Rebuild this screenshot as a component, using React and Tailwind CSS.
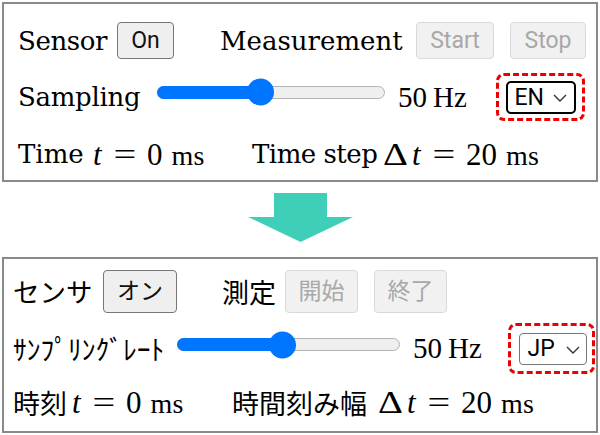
import React from 'react';

const serif = "font-['DejaVu_Serif',serif]";
const math = "font-['Liberation_Serif',serif]";
const ui = "font-['Roboto','Noto_Sans_CJK_JP',sans-serif]";
const jp = "font-['Noto_Sans_CJK_JP',sans-serif]";

const Button = ({ children, disabled, className }) => (
  <button
    disabled={disabled}
    className={`${ui} flex shrink-0 items-center justify-center whitespace-nowrap rounded-[4px] border text-[23px] leading-none ${
      disabled ? 'border-[#d9d9d9] bg-[#f1f1f1] text-[#a8a8a8]' : 'border-[#767676] bg-[#efefef] text-[#111]'
    } ${className}`}
  >
    {children}
  </button>
);

const Slider = ({ track, fill, thumb }) => (
  <div className={`relative h-[13px] rounded-full border border-[#b3b3b3] bg-[#efefef] ${track}`}>
    <div className={`absolute -left-px -top-px -bottom-px rounded-full bg-[#0075ff] ${fill}`} />
    <div className={`absolute top-1/2 h-[27px] w-[27px] -translate-y-1/2 rounded-full bg-[#0075ff] ${thumb}`} />
  </div>
);

const Chevron = () => (
  <svg width="14" height="8" viewBox="0 0 14 8" className="mt-[2px]">
    <polyline points="1,1 7,7 13,1" fill="none" stroke="#333" strokeWidth="1.4" />
  </svg>
);

// t = 0 ms, drawn like the KaTeX output
const Formula = ({ delta, value }) => (
  <span className={`${math} flex items-baseline whitespace-nowrap text-[31px] leading-none text-black`}>
    {delta && <span className="inline-block w-[29px] origin-left scale-x-[1.25]">Δ</span>}
    <span className="italic">t</span>
    <span className="ml-[14px] inline-block scale-x-[1.3]">=</span>
    <span className="ml-[14px]">{value}</span>
    <span className="ml-[9px] text-[28px]">ms</span>
  </span>
);

export default function App() {
  return (
    <div className="w-[600px] h-[435px] bg-white pt-[2px] px-[2px]">
      {/* English panel */}
      <div className="h-[180px] border-2 border-[#8a8a8a] pl-[14px] pt-[18px]">
        <div className="flex h-[37px] items-center">
          <span className={`${serif} w-[90px] shrink-0 text-[26px] leading-none tracking-[-0.4px]`}>Sensor</span>
          <Button className="ml-[9px] h-[37px] w-[57px]">On</Button>
          <span className={`${serif} ml-[46px] w-[187px] shrink-0 text-[26px] leading-none`}>Measurement</span>
          <Button disabled className="ml-[9px] h-[37px] w-[78px]">Start</Button>
          <Button disabled className="ml-[16px] h-[37px] w-[76px]">Stop</Button>
        </div>
        <div className="mt-[13px] flex h-[50px] items-center">
          <span className={`${serif} w-[127px] shrink-0 text-[26px] leading-none tracking-[-0.3px]`}>Sampling</span>
          <div className="ml-[12px] flex h-full w-[228px] shrink-0 items-center pb-[10px]">
            <Slider track="w-[228px]" fill="w-[104px]" thumb="left-[89px]" />
          </div>
          <span className={`${math} ml-[13px] w-[69px] shrink-0 whitespace-nowrap text-[29px] leading-none`}>
            50<span className="ml-[6px]">Hz</span>
          </span>
          <div className="ml-[29px] rounded-[8px] border-[3.5px] border-dashed border-[#ee0000] px-[6.5px] py-[4.5px]">
            <div className={`${ui} flex h-[33px] w-[70px] items-center justify-between rounded-[5px] border-2 border-black pl-[7px] pr-[7px] text-[23px] leading-none`}>
              EN
              <Chevron />
            </div>
          </div>
        </div>
        <div className="mt-[12px] flex h-[40px] items-center">
          <span className={`${serif} w-[75px] shrink-0 text-[26px] leading-none`}>Time</span>
          <span className="w-[159px] shrink-0"><Formula value="0" /></span>
          <span className={`${serif} w-[131px] shrink-0 whitespace-nowrap text-[26px] leading-none tracking-[-0.5px]`}>Time step</span>
          <Formula delta value="20" />
        </div>
      </div>

      {/* arrow */}
      <div className="flex h-[75px] items-start justify-center pt-[11px]">
        <svg width="106" height="50" viewBox="0 0 106 50" className="ml-[2px]">
          <polygon points="26,0 79,0 79,24 105,24 52.5,49 0,24 26,24" fill="#3fcfb8" />
        </svg>
      </div>

      {/* Japanese panel */}
      <div className="h-[176px] border-2 border-[#8a8a8a] pl-[9px] pt-[11px]">
        <div className="flex h-[43px] items-center">
          <span className={`${jp} w-[80px] shrink-0 whitespace-nowrap text-[26.5px] leading-none`}>センサ</span>
          <Button className={`${jp} ml-[10px] h-[43px] w-[74px]`}>オン</Button>
          <span className={`${jp} ml-[45px] w-[55px] shrink-0 whitespace-nowrap text-[27px] leading-none`}>測定</span>
          <Button disabled className={`${jp} ml-[8px] h-[43px] w-[73px]`}>開始</Button>
          <Button disabled className={`${jp} ml-[16px] h-[43px] w-[73px]`}>終了</Button>
        </div>
        <div className="mt-[10px] flex h-[51px] items-center">
          <span className={`${jp} w-[152px] shrink-0 whitespace-nowrap text-[27.5px] leading-none`}>ｻﾝﾌﾟﾘﾝｸﾞﾚｰﾄ</span>
          <div className="ml-[12px] flex h-full w-[223px] shrink-0 items-center pb-[8px]">
            <Slider track="w-[223px]" fill="w-[106px]" thumb="left-[91px]" />
          </div>
          <span className={`${math} ml-[13px] w-[69px] shrink-0 whitespace-nowrap text-[29px] leading-none`}>
            50<span className="ml-[6px]">Hz</span>
          </span>
          <div className="ml-[26px] rounded-[8px] border-[3.5px] border-dashed border-[#ee0000] pl-[7.5px] pr-[5.5px] py-[6.5px]">
            <div className={`${ui} flex h-[32px] w-[68px] items-center justify-between rounded-[4px] border-[1.5px] border-[#767676] pl-[8px] pr-[6px] text-[23px] leading-none`}>
              JP
              <Chevron />
            </div>
          </div>
        </div>
        <div className="mt-[8px] flex h-[40px] items-center">
          <span className={`${jp} w-[59px] shrink-0 whitespace-nowrap text-[27px] leading-none`}>時刻</span>
          <span className="w-[160px] shrink-0"><Formula value="0" /></span>
          <span className={`${jp} w-[146px] shrink-0 whitespace-nowrap text-[27px] leading-none`}>時間刻み幅</span>
          <Formula delta value="20" />
        </div>
      </div>
    </div>
  );
}
